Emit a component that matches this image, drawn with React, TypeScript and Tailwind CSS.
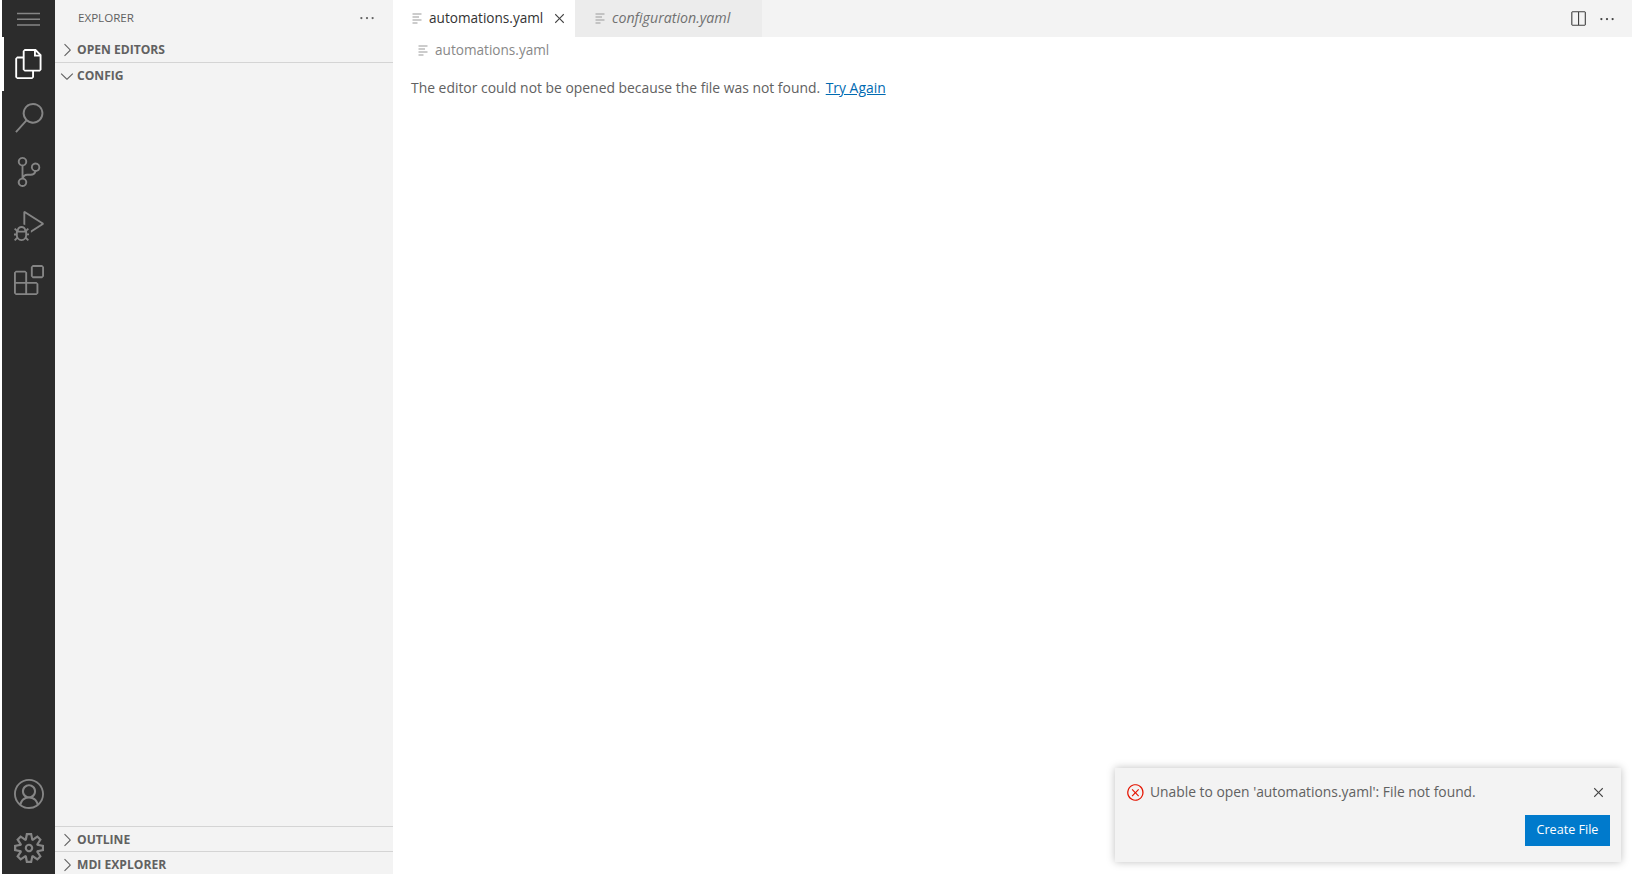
import {
  VscAccount,
  VscChevronDown,
  VscChevronRight,
  VscClose,
  VscDebugAlt,
  VscEllipsis,
  VscError,
  VscExtensions,
  VscFiles,
  VscMenu,
  VscSearch,
  VscSettingsGear,
  VscSourceControl,
  VscSplitHorizontal,
} from "react-icons/vsc";
import type { ReactNode } from "react";

const font = "font-['Open_Sans','Noto_Sans',sans-serif]";

const FileIcon = () => (
  <svg width="11" height="11" viewBox="0 0 11 11" className="shrink-0 text-[#9a9a9a]" fill="currentColor">
    <rect x="0.5" y="0.5" width="9" height="1" />
    <rect x="0.5" y="3.5" width="6.5" height="1" />
    <rect x="0.5" y="6.5" width="9" height="1" />
    <rect x="0.5" y="9.5" width="5" height="1" />
  </svg>
);

const ActivityItem = ({ children, active }: { children: ReactNode; active?: boolean }) => (
  <div
    className={`h-[54px] flex items-center justify-center shrink-0 ${
      active ? "border-l-2 border-white text-white pr-[2px]" : "text-[#858585]"
    }`}
  >
    {children}
  </div>
);

const Section = ({ label, open, border, last }: { label: string; open?: boolean; border?: boolean; last?: boolean }) => (
  <div
    className={`h-[25px] shrink-0 flex items-center pl-[2px] text-[#616161] ${
      border ? "border-t border-[#d4d4d4] pt-[1px]" : ""
    } ${last ? "mb-[-2px]" : ""}`}
  >
    {open ? <VscChevronDown size={20} /> : <VscChevronRight size={20} />}
    <span className="pt-[1px] text-[12.1px] font-bold">{label}</span>
  </div>
);

const App = () => {
  return (
    <div className={`${font} h-[874px] w-[1632px] flex overflow-hidden bg-white text-[#616161]`}>
      <div className="w-[53px] ml-[2px] bg-[#2c2c2c] flex flex-col shrink-0 overflow-hidden">
        <div className="h-[37px] shrink-0 flex items-center justify-center text-[#858585]">
          <VscMenu size={23} />
        </div>
        <ActivityItem active>
          <VscFiles size={30} />
        </ActivityItem>
        <ActivityItem>
          <VscSearch size={30} />
        </ActivityItem>
        <ActivityItem>
          <VscSourceControl size={30} />
        </ActivityItem>
        <ActivityItem>
          <VscDebugAlt size={30} />
        </ActivityItem>
        <ActivityItem>
          <VscExtensions size={30} />
        </ActivityItem>
        <div className="mt-auto" />
        <ActivityItem>
          <VscAccount size={30} />
        </ActivityItem>
        <div className="mb-[-1px]">
          <ActivityItem>
            <VscSettingsGear size={30} />
          </ActivityItem>
        </div>
      </div>

      <div className="w-[338px] bg-[#f3f3f3] flex flex-col shrink-0 overflow-hidden">
        <div className="h-[36px] shrink-0 mb-[1px] flex items-center justify-between pl-[23px] pr-[17px]">
          <span className="text-[11.6px]">EXPLORER</span>
          <VscEllipsis size={18} />
        </div>
        <Section label="OPEN EDITORS" />
        <Section label="CONFIG" open border />
        <div className="flex-1" />
        <Section label="OUTLINE" border />
        <Section label="MDI EXPLORER" border last />
      </div>

      <div className="flex-1 flex flex-col relative min-w-0">
        <div className="h-[37px] bg-[#f3f3f3] flex items-stretch">
          <div className="w-[182px] bg-white flex items-center pl-[19px]">
            <FileIcon />
            <span className="ml-[6px] text-[13.6px] text-[#333333]">automations.yaml</span>
            <VscClose size={17} className="ml-[8px] text-[#424242]" />
          </div>
          <div className="w-[187px] bg-[#ececec] flex items-center pl-[20px]">
            <FileIcon />
            <span className="ml-[6px] pb-[1px] text-[14.2px] italic text-[#717171]">configuration.yaml</span>
          </div>
          <div className="ml-auto flex items-center gap-[11px] pr-[16px] text-[#424242]">
            <VscSplitHorizontal size={18} />
            <VscEllipsis size={18} />
          </div>
        </div>
        <div className="h-[26px] pt-[1px] flex items-center pl-[25px] text-[#888888]">
          <FileIcon />
          <span className="ml-[6px] text-[13.6px]">automations.yaml</span>
        </div>
        <p className="mt-[15px] ml-[18px] text-[13.9px] leading-[20px]">
          The editor could not be opened because the file was not found.{" "}
          <a className="text-[#006ab1] underline ml-[2px]">Try Again</a>
        </p>

        <div className="absolute right-[11px] bottom-[12px] w-[506px] h-[94px] bg-[#f3f3f3] shadow-[0_0_8px_rgba(0,0,0,0.25)] pl-[11px] pr-[11px] pt-[12px]">
          <div className="flex items-center h-[24px]">
            <VscError size={19} className="text-[#e51400]" />
            <span className="ml-[5px] text-[13.85px]">Unable to open 'automations.yaml': File not found.</span>
            <VscClose size={17} className="ml-auto mr-[3px] text-[#424242]" />
          </div>
          <div className="flex justify-end mt-[11px]">
            <button className="w-[85px] h-[31px] bg-[#007acc] text-white text-[12.6px]">Create File</button>
          </div>
        </div>
      </div>
    </div>
  );
};

export default App;
